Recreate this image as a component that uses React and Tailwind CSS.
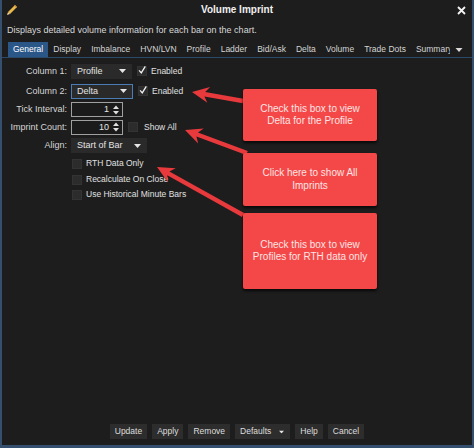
import React from 'react';

const tabs = ['General', 'Display', 'Imbalance', 'HVN/LVN', 'Profile', 'Ladder', 'Bid/Ask', 'Delta', 'Volume', 'Trade Dots', 'Summary'];
const buttons = ['Update', 'Apply', 'Remove', 'Defaults', 'Help', 'Cancel'];

const Caret = ({ className = '' }) => (
  <svg width="7" height="4" viewBox="0 0 7 4" className={className}>
    <path d="M0 0 L7 0 L3.5 4 Z" fill="#e6e6e6" />
  </svg>
);

const Select = ({ value, width, focused }) => (
  <div
    className={`flex items-center justify-between h-[15px] pl-[5px] pr-[5px] bg-[#2a2a2a] border ${focused ? 'border-[#4b7db4]' : 'border-[#2a2a2a]'} ${width}`}
  >
    <span className="text-[9px] text-[#e4e4e4] leading-none">{value}</span>
    <Caret />
  </div>
);

const Spinner = ({ value }) => (
  <div className="flex items-center justify-end w-[52px] h-[15px] bg-[#1b1b1b] border border-[#a0a0a0] pr-[3px]">
    <span className="text-[9px] text-[#e4e4e4] leading-none mr-[4px]">{value}</span>
    <svg width="6" height="10" viewBox="0 0 6 10">
      <path d="M0 4 L6 4 L3 0.5 Z" fill="#e0e0e0" />
      <path d="M0 6 L6 6 L3 9.5 Z" fill="#e0e0e0" />
    </svg>
  </div>
);

const Check = ({ checked }) => (
  <div className="w-[10px] h-[10px] bg-[#2c2c2c] border border-[#333] flex items-center justify-center shrink-0">
    {checked && (
      <svg width="11" height="12" viewBox="0 0 11 12" className="-mt-[2px]">
        <path d="M1.5 6.5 L4.5 10 L10 1" fill="none" stroke="#f2f2f2" strokeWidth="1.8" />
      </svg>
    )}
  </div>
);

const Row = ({ label, h, children }) => (
  <div className={`flex items-center ${h}`}>
    <div className="w-[60px] text-right text-[9px] text-[#d6d6d6] leading-none">{label}</div>
    <div className="ml-[4px] flex items-center">{children}</div>
  </div>
);

function arrowPoints(tx, ty, hx, hy) {
  const dx = hx - tx, dy = hy - ty;
  const len = Math.hypot(dx, dy);
  const ux = dx / len, uy = dy / len;
  const px = -uy, py = ux;
  const w = 2.2, hl = 17, hw = 8, back = 13;
  const bx = hx - ux * back, by = hy - uy * back;
  const ex = hx - ux * hl, ey = hy - uy * hl;
  const pts = [
    [tx + px * w, ty + py * w],
    [bx + px * w, by + py * w],
    [ex + px * hw, ey + py * hw],
    [hx, hy],
    [ex - px * hw, ey - py * hw],
    [bx - px * w, by - py * w],
    [tx - px * w, ty - py * w],
  ];
  return pts.map((p) => p.join(',')).join(' ');
}

const Callout = ({ top, height, lines }) => (
  <div
    className="absolute left-[241px] w-[134px] bg-[#f44848] rounded-[2px] shadow-[0_2px_3px_rgba(0,0,0,0.7)] flex flex-col items-center justify-center text-[10px] leading-[12.5px] text-[#fde4e4]"
    style={{ top, height }}
  >
    {lines.map((l) => (
      <span key={l}>{l}</span>
    ))}
  </div>
);

export default function App() {
  return (
    <div className="relative w-[474px] h-[448px] bg-[#1d1d1d] border-l-2 border-r-2 border-b-[3px] border-[#34506e] flex flex-col font-['Liberation_Sans',Arial,sans-serif] overflow-hidden">
      {/* title bar */}
      <div className="relative h-[20px] flex items-center justify-center shrink-0">
        <svg width="12" height="12" viewBox="0 0 12 12" className="absolute left-[4px] top-[4px]">
          <path d="M9 1 L11 3 L4 10 L2 8 Z" fill="#e9b94c" />
          <path d="M2 8 L4 10 L1 11 Z" fill="#f4d9a0" />
          <path d="M9 1 L11 3 L10.2 3.8 L8.2 1.8 Z" fill="#c98a3a" />
        </svg>
        <span className="text-[10px] font-bold text-[#f0f0f0] leading-none">Volume Imprint</span>
        <svg width="9" height="9" viewBox="0 0 9 9" className="absolute right-[6px] top-[6px]">
          <path d="M1 1 L8 8 M8 1 L1 8" stroke="#f4f4f4" strokeWidth="1.8" />
        </svg>
      </div>

      {/* description */}
      <div className="h-[20px] flex items-center pl-[5px] shrink-0">
        <span className="text-[9px] text-[#d8d8d8] leading-none">Displays detailed volume information for each bar on the chart.</span>
      </div>

      {/* tabs */}
      <div className="mt-[2px] h-[16px] flex items-stretch pl-[6px] pr-[4px] border-b border-[#2b4a6a] shrink-0">
        <div className="flex items-stretch overflow-hidden w-[442px]">
          {tabs.map((t, i) => (
            <div
              key={t}
              className={`px-[5px] flex items-center text-[8.5px] leading-none whitespace-nowrap ${i === 0 ? 'bg-[#2a5788] text-white' : 'text-[#d4d4d4]'}`}
            >
              {t}
            </div>
          ))}
        </div>
        <div className="flex-1 flex items-center justify-center">
          <svg width="8" height="6" viewBox="0 0 8 6">
            <path d="M0.5 1 L7.5 1 L4 5 Z" fill="#d8d8d8" />
          </svg>
        </div>
      </div>

      {/* form */}
      <div className="flex-1 pt-[3px] pl-[5px]">
        <Row label="Column 1:" h="h-[20px]">
          <Select value="Profile" width="w-[61px]" />
          <div className="ml-[5px]"><Check checked /></div>
          <span className="ml-[4px] text-[8.5px] text-[#e0e0e0] leading-none">Enabled</span>
        </Row>
        <Row label="Column 2:" h="h-[20px]">
          <Select value="Delta" width="w-[62px]" focused />
          <div className="ml-[5px]"><Check checked /></div>
          <span className="ml-[4px] text-[8.5px] text-[#e0e0e0] leading-none">Enabled</span>
        </Row>
        <Row label="Tick Interval:" h="h-[17px]">
          <Spinner value="1" />
        </Row>
        <Row label="Imprint Count:" h="h-[18px]">
          <Spinner value="10" />
          <div className="ml-[5px]"><Check /></div>
          <span className="ml-[6px] text-[8.5px] text-[#e0e0e0] leading-none">Show All</span>
        </Row>
        <Row label="Align:" h="h-[19px]">
          <Select value="Start of Bar" width="w-[76px]" />
        </Row>
        <Row label="" h="h-[17px]">
          <div className="ml-[1px]"><Check /></div>
          <span className="ml-[4px] text-[8.5px] text-[#e0e0e0] leading-none">RTH Data Only</span>
        </Row>
        <Row label="" h="h-[15px]">
          <div className="ml-[1px]"><Check /></div>
          <span className="ml-[4px] text-[8.5px] text-[#e0e0e0] leading-none">Recalculate On Close</span>
        </Row>
        <Row label="" h="h-[15px]">
          <div className="ml-[1px]"><Check /></div>
          <span className="ml-[4px] text-[8.5px] text-[#e0e0e0] leading-none">Use Historical Minute Bars</span>
        </Row>
      </div>

      {/* footer */}
      <div className="h-[15px] mb-[6px] flex justify-center gap-[5px] shrink-0">
        {buttons.map((b) => (
          <div key={b} className="px-[5px] bg-[#2d2d2d] flex items-center text-[8.5px] text-[#dedede] leading-none">
            {b}
            {b === 'Defaults' && <Caret className="ml-[7px] scale-75" />}
          </div>
        ))}
      </div>

      {/* annotations */}
      <svg className="absolute left-[-2px] top-0 pointer-events-none" width="474" height="448">
        <polygon points={arrowPoints(243, 101, 192, 92)} fill="#e8393c" />
        <polygon points={arrowPoints(247, 153, 185, 130)} fill="#e8393c" />
        <polygon points={arrowPoints(243, 215, 157, 167)} fill="#e8393c" />
      </svg>
      <Callout top={89} height={52} lines={['Check this box to view', 'Delta for the Profile']} />
      <Callout top={153} height={53} lines={['Click here to show All', 'Imprints']} />
      <Callout top={213} height={76} lines={['Check this box to view', 'Profiles for RTH data only']} />
    </div>
  );
}
